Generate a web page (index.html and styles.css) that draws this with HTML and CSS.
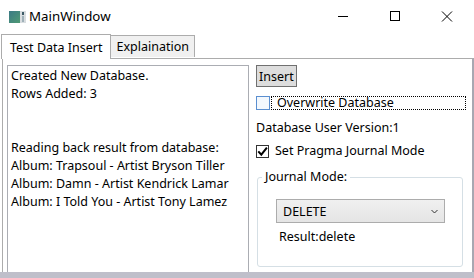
FILE: index.html
```html
<!DOCTYPE html>
<html>
<head>
<meta charset="utf-8">
<link rel="stylesheet" href="styles.css">
</head>
<body>
<div class="window">
  <div class="titlebar">
    <svg class="appicon" width="17" height="12" viewBox="0 0 17 12">
      <defs>
        <linearGradient id="g" x1="0" y1="0" x2="1" y2="1">
          <stop offset="0" stop-color="#3b7a86"/>
          <stop offset="1" stop-color="#4f9a74"/>
        </linearGradient>
      </defs>
      <rect x="0" y="0" width="11" height="12" fill="url(#g)"/>
      <rect x="11" y="0" width="6" height="12" fill="#d8dde0"/>
      <rect x="13" y="1" width="2" height="3" fill="#3d5a66"/>
      <rect x="13" y="5" width="2" height="6" fill="#9fb0b8"/>
    </svg>
    <span class="title">MainWindow</span>
    <div class="controls">
      <svg class="ctl" width="52" height="33" viewBox="0 0 52 33"><path d="M21 16.5h10" stroke="#000" stroke-width="1"/></svg>
      <svg class="ctl" width="52" height="33" viewBox="0 0 52 33"><rect x="21.5" y="11.5" width="9" height="9" fill="none" stroke="#000" stroke-width="1"/></svg>
      <svg class="ctl" width="52" height="33" viewBox="0 0 52 33"><path d="M21 11.5l10 10M31 11.5l-10 10" stroke="#000" stroke-width="1"/></svg>
    </div>
  </div>
  <div class="tabstrip">
    <div class="tab selected">Test Data Insert</div>
    <div class="tab">Explaination</div>
  </div>
  <div class="panel">
    <div class="output">
      <div>Created New Database.</div>
      <div>Rows Added: 3</div>
      <div>&nbsp;</div>
      <div>&nbsp;</div>
      <div>Reading back result from database:</div>
      <div>Album: Trapsoul - Artist Bryson Tiller</div>
      <div>Album: Damn - Artist Kendrick Lamar</div>
      <div>Album: I Told You - Artist Tony Lamez</div>
    </div>
    <div class="side">
      <div class="button">Insert</div>
      <div class="check-row overwrite">
        <span class="box hover"></span>
        <span class="label focus">Overwrite Database</span>
      </div>
      <div class="version">Database User Version:1</div>
      <div class="check-row pragma">
        <span class="box checked">
          <svg width="11" height="11" viewBox="0 0 11 11"><path d="M1.3 5.4l3 3.3L9.9 1.6" fill="none" stroke="#000" stroke-width="2"/></svg>
        </span>
        <span class="label">Set Pragma Journal Mode</span>
      </div>
      <fieldset class="group">
        <legend>Journal Mode:</legend>
        <div class="combo">
          <span>DELETE</span>
          <svg width="7" height="5" viewBox="0 0 7 5"><path d="M0.5 1l3 3 3-3" fill="none" stroke="#333" stroke-width="1"/></svg>
        </div>
        <div class="result">Result:delete</div>
      </fieldset>
    </div>
  </div>
</div>
</body>
</html>
```
FILE: styles.css
```css
html, body {
  margin: 0;
  padding: 0;
}
body {
  width: 474px;
  height: 278px;
  background: #bfbfca;
  font-family: "Noto Sans", "Open Sans", sans-serif;
  font-size: 12.5px;
  color: #000;
  overflow: hidden;
}
.window {
  width: 474px;
  height: 272px;
  background: #fff;
  display: flex;
  flex-direction: column;
}
.titlebar {
  height: 33px;
  display: flex;
  align-items: center;
  flex: none;
}
.appicon {
  margin-left: 9px;
  margin-right: 3px;
  margin-top: 1px;
}
.title {
  font-size: 13.3px;
  line-height: 33px;
}
.controls {
  margin-left: auto;
  display: flex;
  margin-right: 1px;
}
.ctl {
  display: block;
}
.tabstrip {
  height: 25px;
  display: flex;
  align-items: flex-end;
  padding-left: 1px;
  flex: none;
  position: relative;
  z-index: 1;
}
.tab {
  height: 21px;
  line-height: 21px;
  padding: 0 5px 0 5px;
  border: 1px solid #acacac;
  border-bottom: none;
  background: #f0f0f0;
  margin-bottom: 1px;
}
.tab.selected {
  height: 24px;
  line-height: 25px;
  background: #fff;
  padding: 0 8px 0 8px;
  margin-bottom: -1px;
}
.tab.selected + .tab {
  border-left: none;
}
.panel {
  flex: 1;
  margin-left: 2px;
  border: 1px solid #acacac;
  border-bottom: none;
  border-right: 2px solid #a8a8b2;
  display: flex;
  min-height: 0;
}
.output {
  margin: 6px 0 0 4px;
  width: 235px;
  border: 1px solid #abadb3;
  border-bottom: none;
  padding: 1px 2px 0 3px;
  line-height: 18px;
  white-space: nowrap;
  overflow: hidden;
}
.side {
  margin-left: 7px;
  margin-top: 6px;
  width: 210px;
  display: flex;
  flex-direction: column;
  align-items: flex-start;
}
.button {
  height: 22px;
  line-height: 21px;
  padding: 0 2px;
  border: 1px solid #707070;
  background: #dddddd;
  box-sizing: border-box;
}
.check-row {
  display: flex;
  align-items: center;
  height: 18px;
}
.overwrite {
  margin-top: 7px;
  align-self: stretch;
}
.box {
  width: 13px;
  height: 13px;
  border: 1px solid #333;
  background: #fff;
  box-sizing: border-box;
  display: flex;
  align-items: center;
  justify-content: center;
  flex: none;
}
.box.hover {
  border-color: #5b8fd0;
  background: #f3f8fd;
  width: 14px;
  height: 14px;
}
.label {
  margin-left: 1px;
  padding-left: 6px;
  line-height: 16px;
}
.label.focus {
  flex: 1;
  outline: 1px dotted #000;
  outline-offset: -1px;
  height: 14px;
  line-height: 14px;
}
.version {
  margin-top: 7px;
  line-height: 18px;
}
.pragma {
  margin-top: 5px;
}
.pragma .label {
  margin-left: 0;
}
.group {
  margin: 8px 0 0 1px;
  width: 206px;
  box-sizing: border-box;
  border: 1px solid #d5dfe5;
  border-radius: 3px;
  padding: 13px 17px 20px 18px;
  min-width: 0;
}
.group legend {
  padding: 0 3px;
  margin-left: -14px;
  line-height: 18px;
}
.combo {
  height: 24px;
  box-sizing: border-box;
  border: 1px solid #acacac;
  background: linear-gradient(#f0f0f0, #e5e5e5);
  display: flex;
  align-items: center;
  justify-content: space-between;
  padding: 0 6px 0 6px;
}
.result {
  margin-top: 5px;
  margin-left: 3px;
  line-height: 18px;
}
```
